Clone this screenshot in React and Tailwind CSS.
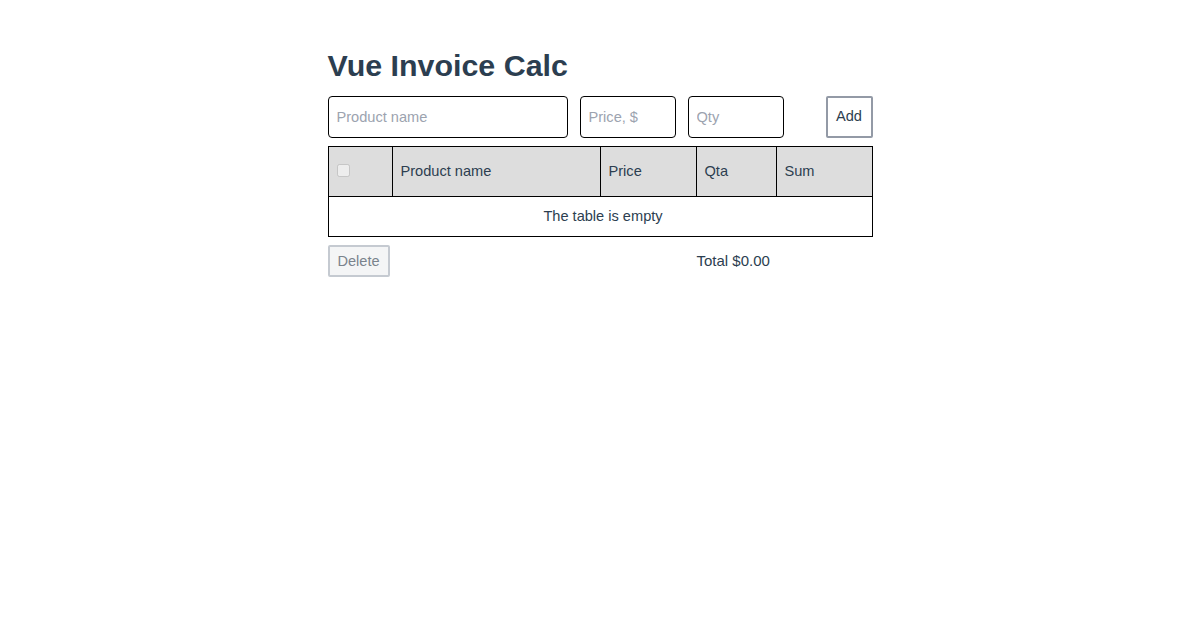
import { useState } from "react";

export default function App() {
  const [items] = useState([]);

  return (
    <div className="min-h-[630px] bg-white font-['Liberation_Sans',Arial,sans-serif] text-[#2c3e50]">
      <div className="mx-auto w-[545px] pt-[44px]">
        <h1 className="text-[30.4px] font-bold leading-[42px] mb-[10px]">Vue Invoice Calc</h1>

        <form className="flex items-center h-[42px] mb-[8px]" onSubmit={(e) => e.preventDefault()}>
          <input
            type="text"
            placeholder="Product name"
            className="w-[240px] h-[42px] px-[8px] border border-black rounded-[4px] text-[14.6px] placeholder:text-[#9ca3af] outline-none"
          />
          <input
            type="text"
            placeholder="Price, $"
            className="ml-[12px] w-[96px] h-[42px] px-[8px] border border-black rounded-[4px] text-[14.6px] placeholder:text-[#9ca3af] outline-none"
          />
          <input
            type="text"
            placeholder="Qty"
            className="ml-[12px] w-[96px] h-[42px] px-[8px] border border-black rounded-[4px] text-[14.6px] placeholder:text-[#9ca3af] outline-none"
          />
          <button
            type="submit"
            className="ml-auto w-[47px] h-[42px] border-2 border-[#939aa6] rounded-[2px] bg-white text-[14.6px] text-[#2c3e50]"
          >
            Add
          </button>
        </form>

        <table className="w-full border-collapse border border-black text-[14.6px]">
          <thead>
            <tr className="bg-[#dddddd] h-[50px]">
              <th className="w-[64px] border border-black px-[8px] text-left font-normal">
                <input type="checkbox" disabled className="block w-[13px] h-[13px] mb-[3px]" />
              </th>
              <th className="w-[208px] border border-black px-[8px] text-left font-normal">Product name</th>
              <th className="w-[96px] border border-black px-[8px] text-left font-normal">Price</th>
              <th className="w-[80px] border border-black px-[8px] text-left font-normal">Qta</th>
              <th className="border border-black px-[8px] text-left font-normal">Sum</th>
            </tr>
          </thead>
          <tbody>
            {items.length === 0 && (
              <tr className="h-[40px]">
                <td colSpan={5} className="text-center border border-black pl-[6px]">
                  The table is empty
                </td>
              </tr>
            )}
          </tbody>
        </table>

        <div className="flex items-center mt-[8px] text-[14.6px]">
          <button
            type="button"
            disabled
            className="w-[62px] h-[32px] pt-[1px] border-2 border-[#c5cad1] rounded-[2px] bg-[#f4f5f6] text-[#7a838d]"
          >
            Delete
          </button>
          <span className="ml-[307px] text-[15px]">Total $0.00</span>
        </div>
      </div>
    </div>
  );
}
